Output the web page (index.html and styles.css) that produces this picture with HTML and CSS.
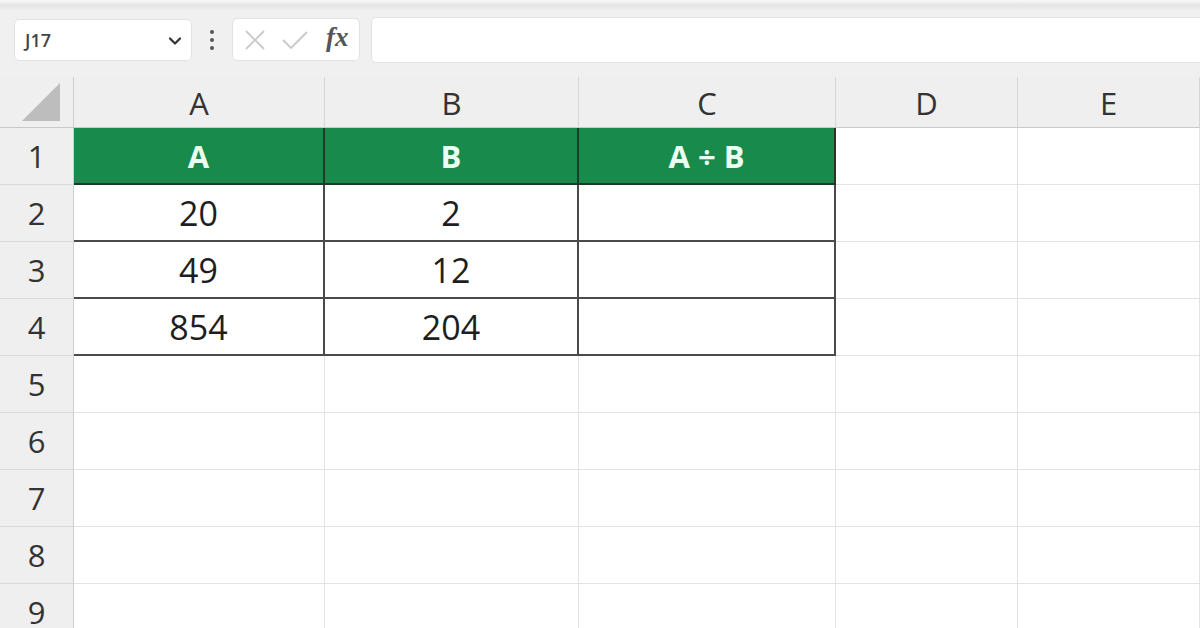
FILE: index.html
```html
<!DOCTYPE html>
<html lang="en">
<head>
    <meta charset="UTF-8">
    <title>A ÷ B</title>
    <link rel="stylesheet" href="styles.css">
</head>
<body>

    <!-- Formula bar -->
    <div class="toolbar">
        <div class="name-box">
            <span>J17</span>
            <svg class="chev" width="14" height="10" viewBox="0 0 14 10"><path d="M2 2.5 L7 7.5 L12 2.5" fill="none" stroke="#333" stroke-width="2.2" stroke-linecap="round" stroke-linejoin="round"/></svg>
        </div>
        <div class="dots"><i></i><i></i><i></i></div>
        <div class="fx-box">
            <svg width="24" height="24" viewBox="0 0 24 24"><path d="M3 3 L21 21 M21 3 L3 21" stroke="#c9c9c9" stroke-width="1.8" fill="none"/></svg>
            <svg width="28" height="24" viewBox="0 0 28 24"><path d="M2 12 L10 20 L26 4" stroke="#c9c9c9" stroke-width="1.8" fill="none"/></svg>
            <span class="fx">fx</span>
        </div>
        <div class="formula-input"></div>
    </div>

    <!-- Sheet grid -->
    <div class="sheet">
        <div class="corner"><svg width="40" height="40" viewBox="0 0 40 40"><polygon points="1,39 39,1 39,39" fill="#bdbdbd"/></svg></div>
        <div class="ch">A</div><div class="ch">B</div><div class="ch">C</div><div class="ch">D</div><div class="ch">E</div>

        <div class="rh">1</div>
        <div class="cell g">A</div><div class="cell g">B</div><div class="cell g">A ÷ B</div><div class="cell"></div><div class="cell"></div>

        <div class="rh">2</div>
        <div class="cell d">20</div><div class="cell d">2</div><div class="cell d"></div><div class="cell"></div><div class="cell"></div>

        <div class="rh">3</div>
        <div class="cell d">49</div><div class="cell d">12</div><div class="cell d"></div><div class="cell"></div><div class="cell"></div>

        <div class="rh">4</div>
        <div class="cell d">854</div><div class="cell d">204</div><div class="cell d"></div><div class="cell"></div><div class="cell"></div>

        <div class="rh">5</div>
        <div class="cell"></div><div class="cell"></div><div class="cell"></div><div class="cell"></div><div class="cell"></div>

        <div class="rh">6</div>
        <div class="cell"></div><div class="cell"></div><div class="cell"></div><div class="cell"></div><div class="cell"></div>

        <div class="rh">7</div>
        <div class="cell"></div><div class="cell"></div><div class="cell"></div><div class="cell"></div><div class="cell"></div>

        <div class="rh">8</div>
        <div class="cell"></div><div class="cell"></div><div class="cell"></div><div class="cell"></div><div class="cell"></div>

        <div class="rh">9</div>
        <div class="cell"></div><div class="cell"></div><div class="cell"></div><div class="cell"></div><div class="cell"></div>
    </div>

</body>
</html>
```

FILE: styles.css
```css
body {
    margin: 0;
    width: 1200px;
    height: 628px;
    overflow: hidden;
    background: #fff;
    font-family: "Open Sans", "Liberation Sans", sans-serif;
}

.toolbar {
    height: 77px;
    box-sizing: border-box;
    display: flex;
    align-items: center;
    padding: 2px 0 0 14px;
    background: linear-gradient(#fafafa 0, #e4e4e4 5px, #f0f0f0 11px, #f0f0f0 100%);
    overflow: hidden;
}

.name-box {
    width: 178px;
    height: 42px;
    box-sizing: border-box;
    flex: none;
    display: flex;
    align-items: center;
    justify-content: space-between;
    padding: 0 9px 0 10px;
    background: #fff;
    border: 1px solid #e2e2e2;
    border-radius: 5px;
    font-size: 18px;
    font-weight: 600;
    color: #444;
}

.chev { margin-top: 2px; }

.dots {
    width: 40px;
    flex: none;
    display: flex;
    flex-direction: column;
    align-items: center;
    gap: 4px;
}

.dots i {
    width: 4px;
    height: 4px;
    border-radius: 50%;
    background: #555;
}

.fx-box {
    width: 128px;
    height: 43px;
    box-sizing: border-box;
    flex: none;
    display: flex;
    align-items: center;
    gap: 14px;
    padding: 0 0 0 10px;
    background: #fff;
    border: 1px solid #e2e2e2;
    border-radius: 5px;
}

.fx {
    font-family: "Liberation Serif", serif;
    font-style: italic;
    font-weight: bold;
    font-size: 27px;
    color: #555;
    margin: -4px 0 0 3px;
}

.formula-input {
    width: 850px;
    height: 44px;
    flex: none;
    margin-left: 11px;
    background: #fff;
    border: 1px solid #e2e2e2;
    border-radius: 5px;
}

.sheet {
    display: grid;
    grid-template-columns: 74px 251px 254px 257px 182px 182px;
    grid-template-rows: 51px repeat(9, 57px);
}

.sheet > div {
    box-sizing: border-box;
    display: flex;
    align-items: center;
    justify-content: center;
}

.corner {
    background: #efefef;
    border-right: 1px solid #cfcfcf;
    border-bottom: 1px solid #c9c9c9;
    padding: 0 0 0 8px;
}

.ch {
    background: #efefef;
    border-right: 1px solid #d6d6d6;
    border-bottom: 1px solid #c9c9c9;
    font-size: 31px;
    color: #333;
    padding-top: 2px;
}

.rh {
    background: #efefef;
    border-right: 1px solid #cfcfcf;
    border-bottom: 1px solid #d9d9d9;
    font-size: 31px;
    color: #333;
}

.cell {
    border-right: 1px solid #e3e3e3;
    border-bottom: 1px solid #e3e3e3;
    font-size: 34px;
    color: #1e1e1e;
}

.cell.d {
    border-right: 2px solid #4a4a4a;
    border-bottom: 2px solid #4a4a4a;
}

.cell.g {
    background: #188a4b;
    border-right: 2px solid #1d3a28;
    border-bottom: 2px solid #1d3a28;
    color: #ecfff3;
    font-weight: bold;
    font-size: 31px;
}
```
